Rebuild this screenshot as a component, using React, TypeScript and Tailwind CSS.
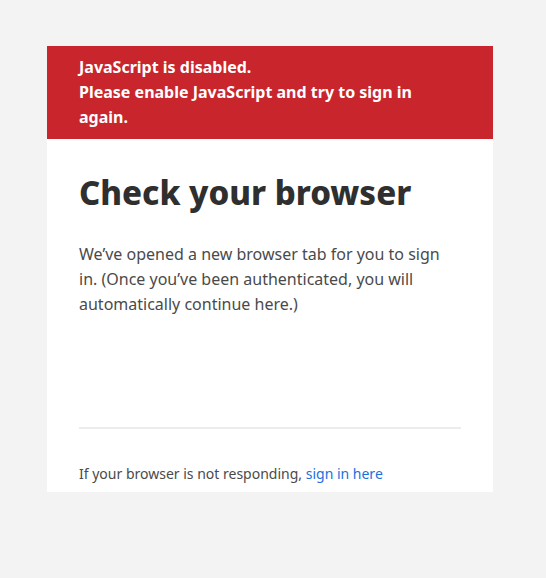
import React from 'react';

const font = { fontFamily: '"Noto Sans", "Open Sans", sans-serif' };

export default function App() {
    return (
        <div className="min-h-screen w-full bg-[#f3f3f3] pt-[46px] pl-[47px]" style={font}>
            <div className="w-[446px] bg-white">
                {/* JS warning */}
                <div className="bg-[#c8252c] pl-8 pr-[60px] py-[9px] text-[16px] font-bold leading-[25px] text-white">
                    <div>JavaScript is disabled.</div>
                    <div>Please enable JavaScript and try to sign in again.</div>
                </div>

                <div className="px-8">
                    <h1 className="pt-[32px] text-[33px] font-extrabold leading-[44px] text-[#2f2f2f]">Check your browser</h1>
                    <p className="mt-[27px] text-[16px] leading-[25px] text-[#4a4a4a]">
                        We’ve opened a new browser tab for you to sign in. (Once you’ve been authenticated, you will automatically continue here.)
                    </p>

                    <div className="mt-[110px] border-t-2 border-[#ececec]" />

                    <p className="pt-[35px] pb-[8px] text-[14px] leading-[20px] text-[#4a4a4a]">
                        If your browser is not responding, <a href="#" className="text-[#1a6fe0]">sign in here</a>
                    </p>
                </div>
            </div>
        </div>
    );
}
